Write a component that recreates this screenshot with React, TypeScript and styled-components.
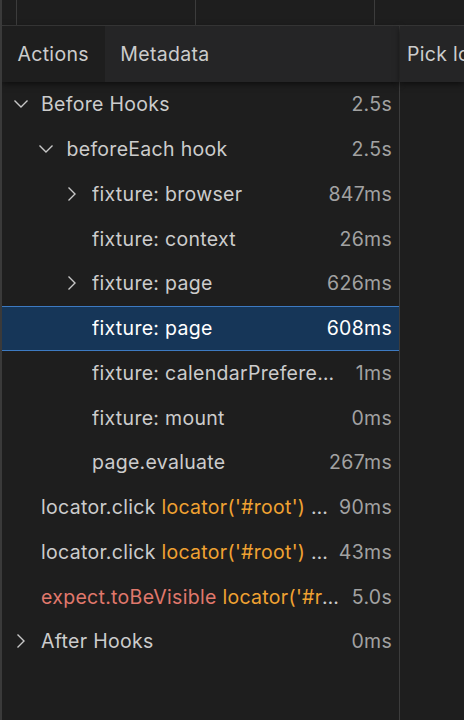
import React from "react";
import styled, { createGlobalStyle } from "styled-components";

const Global = createGlobalStyle`
  html, body { margin: 0; padding: 0; background: #1e1e1e; }
  body { font-family: Inter, "Noto Sans", "Liberation Sans", sans-serif; -webkit-font-smoothing: antialiased; }
  #root { height: 720px; }
`;

const Root = styled.div`
  display: flex;
  flex-direction: column;
  width: 464px;
  height: 720px;
  box-sizing: border-box;
  border-left: 2px solid #3a3a3a;
  background: #1e1e1e;
  overflow: hidden;
  color: #cccccc;
`;

const TopStrip = styled.div`
  display: grid;
  grid-template-columns: 15px 179px 179px 1fr;
  height: 25px;
  border-bottom: 1px solid #3c3c3c;
  background: #1e1e1e;
  flex: none;
`;

const StripCell = styled.div<{ $last?: boolean }>`
  border-right: ${(p) => (p.$last ? "none" : "1px solid #3c3c3c")};
`;

const Main = styled.div`
  display: flex;
  flex: 1;
  min-height: 0;
`;

const LeftPane = styled.div`
  width: 397px;
  flex: none;
  display: flex;
  flex-direction: column;
  border-right: 1px solid #3c3c3c;
`;

const RightPane = styled.div`
  flex: 1;
  min-width: 0;
  display: flex;
  flex-direction: column;
`;

const TabBar = styled.div`
  display: flex;
  height: 56px;
  background: #252526;
  flex: none;
  position: relative;
  z-index: 1;
  box-shadow: 0 2px 6px rgba(0, 0, 0, 0.55);
`;

const Tab = styled.div<{ $active?: boolean }>`
  display: flex;
  align-items: center;
  padding: 0 16px 0 15.5px;
  font-size: 19.5px;
  letter-spacing: 0.3px;
  color: #cccccc;
  white-space: nowrap;
  background: ${(p) => (p.$active ? "#1e1e1e" : "transparent")};
`;

const RightTab = styled(Tab)`
  padding-left: 7px;
`;

const List = styled.div`
  display: flex;
  flex-direction: column;
`;

const Row = styled.div<{ $level: number; $selected?: boolean }>`
  display: flex;
  align-items: center;
  height: 44.75px;
  box-sizing: border-box;
  padding-left: ${(p) => 6 + p.$level * 25.5}px;
  padding-right: 7px;
  font-size: 19.5px;
  letter-spacing: 0.3px;
  background: ${(p) => (p.$selected ? "#163658" : "transparent")};
  border-top: 1px solid ${(p) => (p.$selected ? "#3d7ac2" : "transparent")};
  border-bottom: 1px solid ${(p) => (p.$selected ? "#3d7ac2" : "transparent")};
  color: ${(p) => (p.$selected ? "#ffffff" : "#cccccc")};
`;

const Twisty = styled.div`
  width: 25px;
  flex: none;
  display: flex;
  align-items: center;
  justify-content: center;
  margin-right: 8px;
`;

const Title = styled.div`
  flex: 1;
  min-width: 0;
  overflow: hidden;
  text-overflow: ellipsis;
  white-space: nowrap;
`;

const Method = styled.span<{ $error?: boolean }>`
  color: ${(p) => (p.$error ? "#e0786c" : "inherit")};
`;

const Param = styled.span`
  color: #f0a232;
`;

const Time = styled.div<{ $selected?: boolean }>`
  flex: none;
  margin-left: 10px;
  color: ${(p) => (p.$selected ? "#ffffff" : "#a2a2a2")};
`;

const Chevron = ({ open }: { open: boolean }) =>
  open ? (
    <svg width="16" height="10" viewBox="0 0 16 10">
      <polyline points="1.5,1.5 8,8 14.5,1.5" fill="none" stroke="#c8c8c8" strokeWidth="1.4" />
    </svg>
  ) : (
    <svg width="10" height="16" viewBox="0 0 10 16">
      <polyline points="1.5,1.5 8,8 1.5,14.5" fill="none" stroke="#c8c8c8" strokeWidth="1.4" />
    </svg>
  );

type Item = {
  level: number;
  twisty?: "open" | "closed";
  method: string;
  param?: string;
  time: string;
  selected?: boolean;
  error?: boolean;
};

const items: Item[] = [
  { level: 0, twisty: "open", method: "Before Hooks", time: "2.5s" },
  { level: 1, twisty: "open", method: "beforeEach hook", time: "2.5s" },
  { level: 2, twisty: "closed", method: "fixture: browser", time: "847ms" },
  { level: 2, method: "fixture: context", time: "26ms" },
  { level: 2, twisty: "closed", method: "fixture: page", time: "626ms" },
  { level: 2, method: "fixture: page", time: "608ms", selected: true },
  { level: 2, method: "fixture: calendarPreferences", time: "1ms" },
  { level: 2, method: "fixture: mount", time: "0ms" },
  { level: 2, method: "page.evaluate", time: "267ms" },
  { level: 0, method: "locator.click", param: "locator('#root') >> internal:role=button", time: "90ms" },
  { level: 0, method: "locator.click", param: "locator('#root') >> internal:text=\"Save\"", time: "43ms" },
  { level: 0, method: "expect.toBeVisible", param: "locator('#root') >> internal:text=\"Done\"", time: "5.0s", error: true },
  { level: 0, twisty: "closed", method: "After Hooks", time: "0ms" },
];

export default function App() {
  return (
    <>
      <Global />
      <Root>
        <TopStrip>
          <StripCell />
          <StripCell />
          <StripCell />
          <StripCell $last />
        </TopStrip>
        <Main>
          <LeftPane>
            <TabBar>
              <Tab $active>Actions</Tab>
              <Tab>Metadata</Tab>
            </TabBar>
            <List>
              {items.map((it, i) => (
                <Row key={i} $level={it.level} $selected={it.selected}>
                  <Twisty>{it.twisty && <Chevron open={it.twisty === "open"} />}</Twisty>
                  <Title>
                    <Method $error={it.error}>{it.method}</Method>
                    {it.param && <Param> {it.param}</Param>}
                  </Title>
                  <Time $selected={it.selected}>{it.time}</Time>
                </Row>
              ))}
            </List>
          </LeftPane>
          <RightPane>
            <TabBar>
              <RightTab>Pick locator</RightTab>
            </TabBar>
          </RightPane>
        </Main>
      </Root>
    </>
  );
}
